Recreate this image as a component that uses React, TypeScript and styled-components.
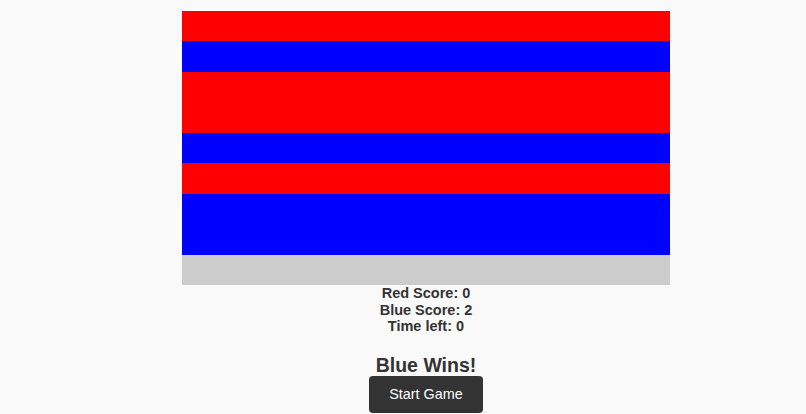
import React, { useState } from 'react'
import styled, { createGlobalStyle } from 'styled-components'

type Team = 'red' | 'blue' | 'empty'

const GlobalStyle = createGlobalStyle`
  body {
    margin: 0;
    background-color: #f9f9f9;
    font-family: 'Liberation Sans', Arial, sans-serif;
    color: #333;
  }
`

const Page = styled.div`
  display: flex;
  flex-direction: column;
  align-items: center;
  padding: 11px 0 0 46px;
`

const Board = styled.div`
  width: 488px;
  height: 274px;
  display: flex;
  flex-direction: column;
`

const teamColor: Record<Team, string> = {
  red: '#ff0000',
  blue: '#0000ff',
  empty: '#cccccc'
}

const Stripe = styled.div<{ team: Team }>`
  flex: 1;
  background-color: ${(props) => teamColor[props.team]};
`

const ScoreBoard = styled.div`
  display: flex;
  flex-direction: column;
  align-items: center;
  font-size: 14.5px;
  font-weight: bold;
  line-height: 1.15;
`

const Winner = styled.h2`
  margin: 19.2px 0 0;
  font-size: 19.5px;
  line-height: 1.13;
`

const StartButton = styled.button`
  background-color: #333;
  color: white;
  border: none;
  border-radius: 4px;
  padding: 10px 20px;
  font-family: 'Liberation Sans', Arial, sans-serif;
  font-size: 14.4px;
  line-height: 1.15;
  cursor: pointer;
`

const initialStripes: Team[] = [
  'red',
  'blue',
  'red',
  'red',
  'blue',
  'red',
  'blue',
  'blue',
  'empty'
]

function App() {
  const [stripes] = useState<Team[]>(initialStripes)
  const [redScore] = useState(0)
  const [blueScore] = useState(2)
  const [timeLeft] = useState(0)

  return (
    <>
      <GlobalStyle />
      <Page>
        <Board>
          {stripes.map((team, i) => (
            <Stripe key={i} team={team} />
          ))}
        </Board>
        <ScoreBoard>
          <span>Red Score: {redScore}</span>
          <span>Blue Score: {blueScore}</span>
          <span>Time left: {timeLeft}</span>
        </ScoreBoard>
        <Winner>Blue Wins!</Winner>
        <StartButton>Start Game</StartButton>
      </Page>
    </>
  )
}

export default App
